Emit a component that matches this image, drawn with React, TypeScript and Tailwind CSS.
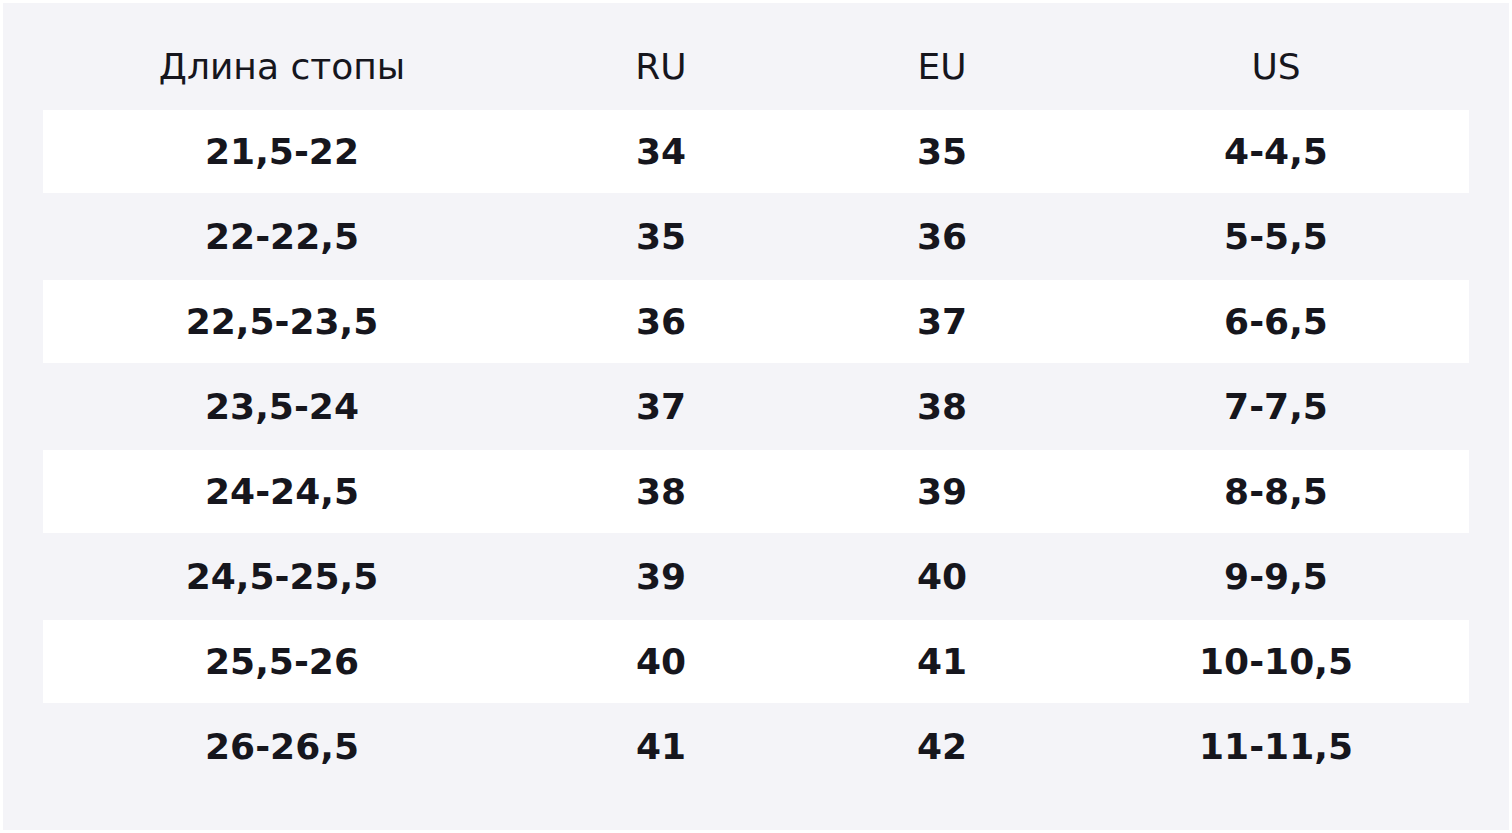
const rows: [string, string, string, string][] = [
  ['21,5-22', '34', '35', '4-4,5'],
  ['22-22,5', '35', '36', '5-5,5'],
  ['22,5-23,5', '36', '37', '6-6,5'],
  ['23,5-24', '37', '38', '7-7,5'],
  ['24-24,5', '38', '39', '8-8,5'],
  ['24,5-25,5', '39', '40', '9-9,5'],
  ['25,5-26', '40', '41', '10-10,5'],
  ['26-26,5', '41', '42', '11-11,5'],
];

const cols = 'grid grid-cols-[478px_280px_282px_386px]';

const App = () => {
  return (
    <div className="min-h-screen bg-white p-[3px]" style={{ fontFamily: '"DejaVu Sans", sans-serif' }}>
      <div className="bg-[#f4f4f8] px-10 pt-[21px] pb-10 text-[#16161d]">
        {/* header */}
        <div className={`${cols} h-[86px] items-center text-center text-[36px]`}>
          <div>Длина стопы</div>
          <div>RU</div>
          <div>EU</div>
          <div>US</div>
        </div>

        {rows.map((r, i) => (
          <div
            key={r[0]}
            className={`${cols} items-center text-center text-[36px] font-bold ${
              i % 2 === 0 ? 'h-[83px] bg-white' : 'h-[87px]'
            }`}
          >
            {r.map((c, j) => (
              <div key={j}>{c}</div>
            ))}
          </div>
        ))}
      </div>
    </div>
  );
};

export default App;
